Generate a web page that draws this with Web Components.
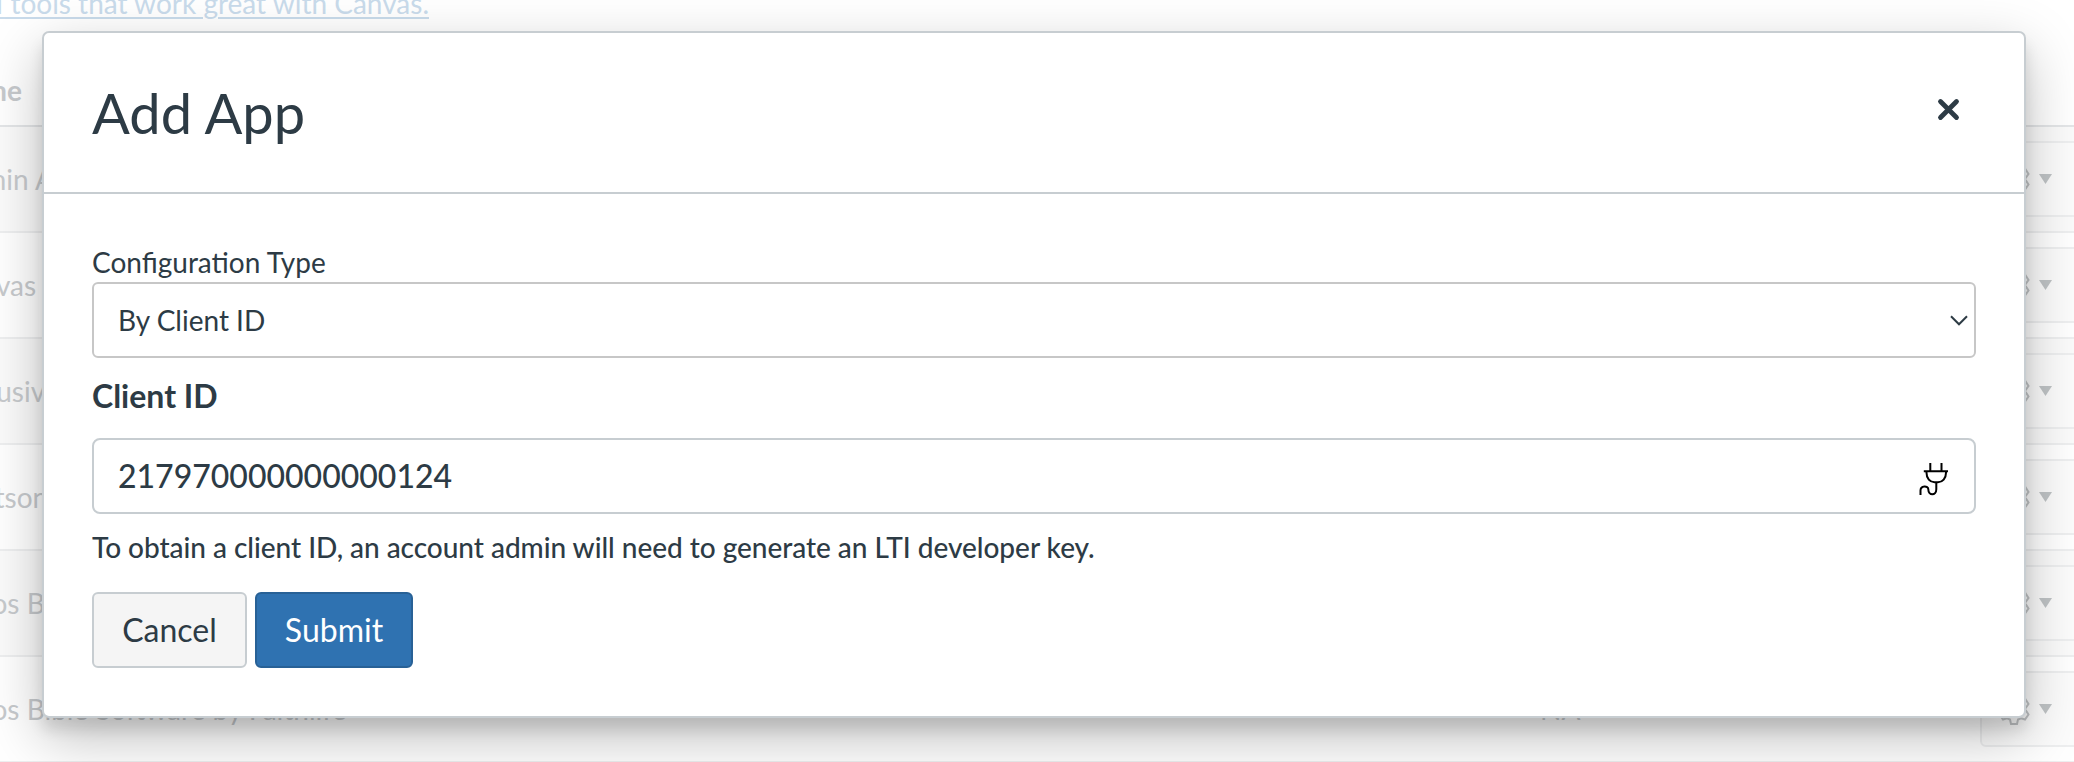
<!DOCTYPE html>
<html lang="en">
<head>
<meta charset="utf-8">
<title>Add App</title>
<style>
  html, body { margin: 0; height: 762px; overflow: hidden; background: #fff; }
  body { font-family: Lato, "Liberation Sans", sans-serif; color: #2d3b45; }
</style>
</head>
<body>
<external-apps-page></external-apps-page>
<app-modal heading="Add App">
  <select-field label="Configuration Type" value="By Client ID"></select-field>
  <client-field label="Client ID" value="217970000000000124" hint="To obtain a client ID, an account admin will need to generate an LTI developer key."></client-field>
  <modal-button slot="actions">Cancel</modal-button>
  <modal-button slot="actions" primary>Submit</modal-button>
</app-modal>
<script>
class BaseElement extends HTMLElement {
  connectedCallback() {
    if (!this.shadowRoot) this.attachShadow({ mode: "open" }).innerHTML = this.render();
  }
}
const attr = (el, n) => el.getAttribute(n) || "";

customElements.define("tool-row", class extends BaseElement {
  render() {
    return `<style>
      :host { display: flex; box-sizing: border-box; height: 106px; border-top: 2px solid #eeeff0; padding: 14px 0 14px 0; font-size: 28px; color: #c7cacd; }
      :host([shaded]) { background: #fbfbfb; }
      .name { width: 1540px; white-space: nowrap; line-height: 76px; text-indent: var(--shift, 0px); flex: none; }
      .type { line-height: 76px; width: 440px; flex: none; }
      .menu { box-sizing: border-box; width: 126px; flex: none; height: 76px; border: 2px solid #eeeff0; border-radius: 6px; background: #fcfcfc; display: flex; align-items: center; padding-left: 16px; }
      .gear { width: 32px; height: 32px; flex: none; }
      .arrow { width: 13px; height: 10px; margin-left: 9px; flex: none; }
    </style>
    <div class="name"><slot></slot></div><div class="type">${attr(this, "type")}</div>
    <div class="menu">
      <svg class="gear" viewBox="0 0 32 32" fill="none" stroke="#c0c3c5" stroke-width="2"><path d="M13 1h6l1 4.500 3 1.500 4-1.500 3.500 5.500-3.500 5 3.500 5.500-3.500 5-4-1.200-3 1.200-1 4.500h-6l-1-4.500-3-1.200-4 1.200-3.500-5 3.500-5.500-3.500-5L5 5.500 9 7l3-1.500z"/><circle cx="16" cy="16" r="5"/></svg>
      <svg class="arrow" viewBox="0 0 13 10"><path d="M0 0h13L6.500 10z" fill="#c0c4c6"/></svg>
    </div>`;
  }
});

customElements.define("external-apps-page", class extends BaseElement {
  render() {
    return `<style>
      :host { display: flow-root; height: 762px; overflow: hidden; }
      .intro { display: flow-root; height: 20px; font-size: 28px; line-height: 34px; color: #c9dbeb; white-space: nowrap; }
      .intro span { display: block; width: 429px; direction: rtl; margin-top: -14px; text-decoration: underline; text-decoration-thickness: 2px; text-underline-offset: 3px; }
      .intro bdo { unicode-bidi: isolate; direction: ltr; }
      .head { box-sizing: border-box; height: 107px; font-size: 28px; line-height: 34px; font-weight: 700; color: #c7cacd; padding-top: 53px; border-bottom: 2px solid #e4e6e8; }
      .head span { display: block; width: 22px; direction: rtl; white-space: nowrap; }
      tool-row:first-of-type { border-top: 0; height: 104px; }
    </style>
    <div class="intro"><span><bdo>LTI tools that work great with Canvas.</bdo></span></div>
    <div class="head"><span>Name</span></div>
    <tool-row shaded style="--shift:-51px">Admin A</tool-row>
    <tool-row style="--shift:-52px">Canvas</tool-row>
    <tool-row shaded style="--shift:-47px">Inclusive</tool-row>
    <tool-row style="--shift:-50px">Gartson</tool-row>
    <tool-row shaded style="--shift:-52px">Logos B</tool-row>
    <tool-row style="--shift:-52px" type="NA">Logos Bible Software by Faithlife</tool-row>
    <tool-row shaded></tool-row>`;
  }
});

customElements.define("app-modal", class extends BaseElement {
  render() {
    return `<style>
      :host { position: absolute; left: 42px; top: 31px; box-sizing: border-box; width: 1984px; height: 687px; display: flex; flex-direction: column; background: #fff; border: 2px solid #c7cdd1; border-radius: 7px; box-shadow: 0 12px 14px rgba(0,0,0,.1), 0 20px 56px rgba(0,0,0,.25); }
      header { box-sizing: border-box; height: 161px; flex: none; border-bottom: 2px solid #c7cdd1; display: flex; align-items: center; justify-content: space-between; padding: 0 64px 0 48px; }
      h2 { margin: 1px 0 0; font-weight: 400; font-size: 56px; line-height: 68px; }
      .close { width: 23px; height: 23px; margin-top: -7px; }
      main { padding: 48px 48px 0; display: flex; flex-direction: column; }
      footer { display: flex; gap: 8px; margin-top: 27px; }
    </style>
    <header><h2>${attr(this, "heading")}</h2>
      <svg class="close" viewBox="0 0 23 23"><path d="M3.500 3.500l16 16m0-16l-16 16" stroke="#2d3b45" stroke-width="4.800" stroke-linecap="round"/></svg>
    </header>
    <main><slot></slot><footer><slot name="actions"></slot></footer></main>`;
  }
});

customElements.define("select-field", class extends BaseElement {
  render() {
    return `<style>
      :host { display: block; font-size: 28px; }
      label { display: block; height: 40px; line-height: 40px; }
      .box { box-sizing: border-box; height: 76px; border: 2px solid #c7c7c7; border-radius: 6px; display: flex; align-items: center; justify-content: space-between; padding: 0 6px 0 24px; }
      svg { width: 18px; height: 11px; }
    </style>
    <label>${attr(this, "label")}</label>
    <div class="box"><span>${attr(this, "value")}</span><svg viewBox="0 0 18 11"><path d="M1 1.300l8 8 8-8" fill="none" stroke="#2d3b45" stroke-width="2"/></svg></div>`;
  }
});

customElements.define("client-field", class extends BaseElement {
  render() {
    return `<style>
      :host { display: block; }
      label { display: block; font-size: 32px; font-weight: 700; line-height: 40px; margin-top: 18px; }
      .box { box-sizing: border-box; height: 76px; margin-top: 22px; border: 2px solid #c7cdd1; border-radius: 8px; display: flex; align-items: center; justify-content: space-between; padding: 0 25px 0 24px; font-size: 32px; font-weight: 500; }
      .box span { margin-top: -1px; }
      svg { width: 30px; height: 34px; margin-top: 7px; }
      p { margin: 15px 0 0; font-size: 28px; line-height: 36px; font-weight: 500; letter-spacing: -.035px; }
    </style>
    <label>${attr(this, "label")}</label>
    <div class="box"><span>${attr(this, "value")}</span><svg viewBox="0 0 30 34" fill="none" stroke="#000" stroke-width="2"><path d="M11.300 0v8M22.500 0v8M4.800 8.300H29M7.500 8.300v1.500C7.500 15.500 11 19.300 15.500 19.300h3.500c4.500 0 8-3.800 8-9.500V8.300M17.300 19.300v7c0 6.500-8 6.500-8 0 0-4-7.800-4-7.800 1.200v4.500"/></svg></div>
    <p>${attr(this, "hint")}</p>`;
  }
});

customElements.define("modal-button", class extends BaseElement {
  render() {
    return `<style>
      :host { display: block; }
      button { box-sizing: border-box; display: block; height: 76px; width: 155px; margin: 0; padding: 0; border: 2px solid #c7cdd1; border-radius: 6px; background: #f5f5f5; color: #2d3b45; font: 400 32px/40px Lato, sans-serif; }
      :host([primary]) button { width: 158px; background: #2f72b1; border-color: #286196; color: #fff; }
    </style><button><slot></slot></button>`;
  }
});
</script>
</body>
</html>
